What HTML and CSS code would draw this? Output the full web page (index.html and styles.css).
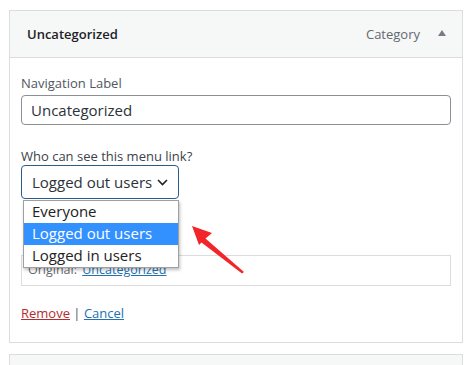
FILE: index.html
```html
<!DOCTYPE html>
<html>
<head>
<meta charset="utf-8">
<link rel="stylesheet" href="styles.css">
</head>
<body>
<div class="wrap">
  <div class="panel">
    <div class="head">
      <span class="title">Uncategorized</span>
      <span class="type">Category</span>
      <span class="toggle"></span>
    </div>
    <div class="body">
      <label class="lbl">Navigation Label</label>
      <div class="input">Uncategorized</div>
      <label class="lbl lbl2">Who can see this menu link?</label>
      <div class="selwrap">
        <div class="select">
          <span>Logged out users</span>
          <svg class="chev" width="11" height="7" viewBox="0 0 11 7"><path d="M1 1l4.5 4.5L10 1" fill="none" stroke="#1d2327" stroke-width="1.6"/></svg>
        </div>
        <ul class="menu">
          <li>Everyone</li>
          <li class="sel">Logged out users</li>
          <li>Logged in users</li>
        </ul>
      </div>
      <div class="orig">Original: <a href="#">Uncategorized</a></div>
      <div class="actions"><a class="remove" href="#">Remove</a> | <a class="cancel" href="#">Cancel</a></div>
    </div>
  </div>
  <div class="panel next"></div>
  <svg class="arrow" width="474" height="365" viewBox="0 0 474 365">
    <path d="M192 226 L212 233 L205.5 238.5 L244 272 L242 273.5 L201.5 242.5 L199 245 Z" fill="#f2262a"/>
  </svg>
</div>
</body>
</html>
```
FILE: styles.css
```css
* { box-sizing: border-box; }
html, body { margin: 0; padding: 0; background: #fff; }
body { font-family: "Open Sans", "Noto Sans", sans-serif; color: #1d2327; }
.wrap { position: relative; padding: 10px 11px 0 9px; width: 474px; height: 365px; overflow: hidden; }
.panel { border: 1px solid #dcdcde; width: 454px; background: #fff; }
.head { height: 47px; background: #f6f7f7; border-bottom: 1px solid #dcdcde; display: flex; align-items: center; padding: 0 0 0 17px; }
.title { font-weight: 600; font-size: 13px; color: #1d2327; flex: 1; }
.type { font-size: 13px; color: #646970; margin-right: 18px; }
.toggle { width: 0; height: 0; border-left: 4px solid transparent; border-right: 4px solid transparent; border-bottom: 6px solid #787c82; margin-right: 16px; margin-top: -2px; }
.body { padding: 16px 11px 0 11px; height: 284px; }
.lbl { display: block; font-size: 13px; color: #50575e; line-height: 18px; }
.input { margin-top: 3px; width: 430px; height: 30px; border: 1px solid #8c8f94; border-radius: 4px; font-size: 15px; line-height: 28px; padding-left: 9px; color: #2c3338; }
.lbl2 { margin-top: 22px; color: #3c434a; }
.selwrap { position: relative; margin-top: 0px; }
.select { width: 158px; height: 34px; border: 1.5px solid #2c5d8a; border-radius: 4px; display: flex; align-items: center; padding-left: 10px; font-size: 15px; color: #2c3338; }
.select span { flex: 1; }
.chev { margin-right: 10px; }
.menu { position: absolute; left: 2px; top: 35px; width: 156px; margin: 0; padding: 0; list-style: none; background: #fff; border: 1px solid #a0a0a0; box-shadow: 1px 2px 3px rgba(0,0,0,0.25); font-size: 15px; z-index: 5; }
.menu li { height: 22px; line-height: 21px; padding-left: 8px; color: #222; }
.menu li.sel { background: #3390ff; color: #fff; }
.orig { margin-top: 56px; width: 430px; height: 31px; border: 1px solid #dcdcde; font-size: 12.5px; color: #646970; padding: 6px 0 0 6px; line-height: 16px; }
.orig a { color: #2271b1; margin-left: 2px; }
.actions { margin-top: 18px; font-size: 13px; color: #50575e; }
.remove { color: #b32d2e; }
.cancel { color: #2271b1; }
.next { margin-top: 11px; height: 30px; background: #f6f7f7; }
.arrow { position: absolute; left: 0; top: 0; z-index: 10; pointer-events: none; }
```
